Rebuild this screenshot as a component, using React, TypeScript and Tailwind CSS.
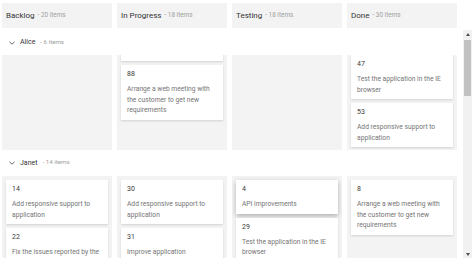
import React from "react";

type Card = { id: number; text: string; raised?: boolean };

const columns = [
  { title: "Backlog", count: 20 },
  { title: "In Progress", count: 18 },
  { title: "Testing", count: 18 },
  { title: "Done", count: 30 },
];

const alice: Card[][] = [
  [],
  [
    { id: 85, text: "Fix the issues reported by the customer" },
    { id: 88, text: "Arrange a web meeting with the customer to get new requirements" },
  ],
  [],
  [
    { id: 47, text: "Test the application in the IE browser" },
    { id: 53, text: "Add responsive support to application" },
  ],
];

const janet: Card[][] = [
  [
    { id: 14, text: "Add responsive support to application" },
    { id: 22, text: "Fix the issues reported by the customer" },
  ],
  [
    { id: 30, text: "Add responsive support to application" },
    { id: 31, text: "Improve application performance" },
  ],
  [
    { id: 4, text: "API improvements", raised: true },
    { id: 29, text: "Test the application in the IE browser" },
  ],
  [{ id: 8, text: "Arrange a web meeting with the customer to get new requirements" }],
];

function KanbanCard({ card }: { card: Card }) {
  return (
    <div
      className={
        "bg-white px-[6px] pt-[5px] pb-[4px] " +
        (card.raised
          ? "shadow-[0_2px_5px_rgba(0,0,0,0.28)]"
          : "shadow-[0_1px_2px_rgba(0,0,0,0.14)]")
      }
    >
      <div className="text-[7px] leading-[9px] text-[#3a3a3a] mb-[5px]">{card.id}</div>
      <div className="text-[6.7px] leading-[10.5px] text-[#757575]">{card.text}</div>
    </div>
  );
}

function Chevron() {
  return (
    <svg width="6" height="4" viewBox="0 0 6 4" fill="none">
      <path d="M0.5 0.8 L3 3.2 L5.5 0.8" stroke="#555" strokeWidth="0.9" />
    </svg>
  );
}

function LaneHeader({ name, count, h }: { name: string; count: number; h: string }) {
  return (
    <div className={"flex items-center gap-[5px] pl-[9px] " + h}>
      <Chevron />
      <span className="text-[7px] text-[#333]">{name}</span>
      <span className="text-[6.2px] text-[#9e9e9e]">- {count} items</span>
    </div>
  );
}

export default function App() {
  return (
    <div className="w-[474px] h-[265px] bg-white overflow-hidden font-['Roboto',sans-serif]">
      {/* Column headers */}
      <div className="flex gap-[5px] ml-[2px] mt-[3px]">
        {columns.map((c) => (
          <div key={c.title} className="w-[110px] h-[25px] bg-[#f3f3f3] flex items-center gap-[3px] pl-[4px]">
            <span className="text-[8px] text-[#333]">{c.title}</span>
            <span className="text-[6.4px] text-[#a0a0a0]">- {c.count} items</span>
          </div>
        ))}
      </div>

      <div className="flex mt-[2px]">
        <div className="w-[463px] h-[228px] overflow-hidden">
          <LaneHeader name="Alice" count={6} h="h-[25px]" />
          {/* Alice row, partly scrolled out */}
          <div className="flex gap-[5px] ml-[2px] h-[95px]">
            {alice.map((cards, i) => (
              <div key={i} className="w-[110px] bg-[#f3f3f3] overflow-hidden px-[4px]">
                <div className={"flex flex-col gap-[4px] " + (i === 1 ? "-mt-[38px]" : "")}>
                  {cards.map((c) => (
                    <KanbanCard key={c.id} card={c} />
                  ))}
                </div>
              </div>
            ))}
          </div>
          <LaneHeader name="Janet" count={14} h="h-[26px]" />
          <div className="flex gap-[5px] ml-[2px] h-[120px]">
            {janet.map((cards, i) => (
              <div key={i} className="w-[110px] bg-[#f3f3f3] overflow-hidden px-[4px] pt-[4px]">
                <div className="flex flex-col gap-[4px]">
                  {cards.map((c) => (
                    <KanbanCard key={c.id} card={c} />
                  ))}
                </div>
              </div>
            ))}
          </div>
        </div>

        {/* Scrollbar */}
        <div className="w-[9px] h-[228px] bg-[#f1f1f1] flex flex-col items-center">
          <div className="h-[8px] flex items-center">
            <div className="w-0 h-0 border-l-[2.5px] border-r-[2.5px] border-b-[3px] border-l-transparent border-r-transparent border-b-[#505050]" />
          </div>
          <div className="w-[7px] h-[56px] bg-[#c1c1c1] mt-[2px]" />
          <div className="flex-1" />
          <div className="h-[8px] flex items-center">
            <div className="w-0 h-0 border-l-[2.5px] border-r-[2.5px] border-t-[3px] border-l-transparent border-r-transparent border-t-[#505050]" />
          </div>
        </div>
      </div>
    </div>
  );
}
